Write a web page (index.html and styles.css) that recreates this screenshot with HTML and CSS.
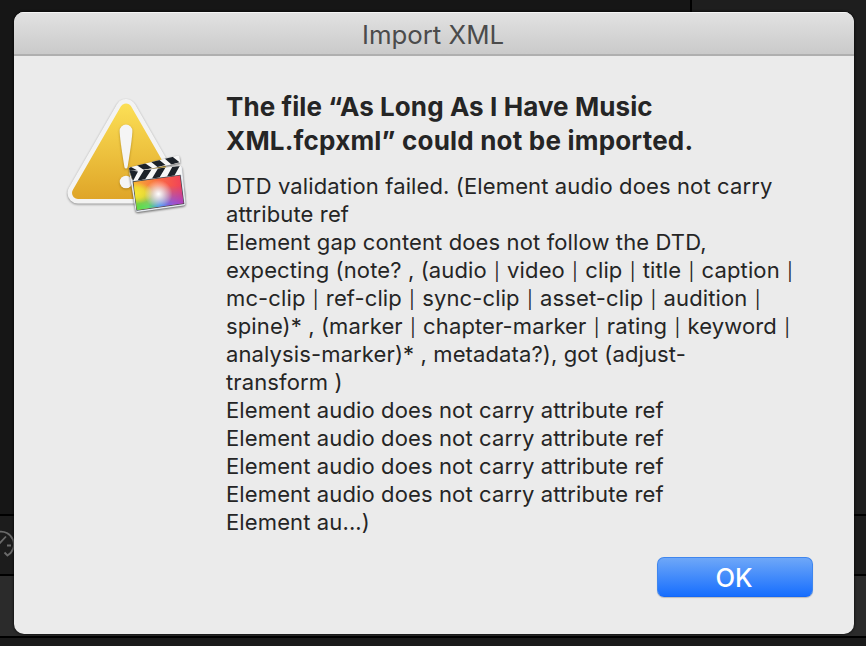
FILE: index.html
```html
<!DOCTYPE html>
<html lang="en">

<head>
    <meta charset="UTF-8">
    <meta name="viewport" content="width=device-width, initial-scale=1.0">
    <title>Import XML</title>
    <link rel="stylesheet" href="styles.css">
</head>

<body>
    <!-- editor window behind the dialog -->
    <div class="backdrop">
        <div class="panes">
            <div class="pane-left"></div>
            <div class="pane-right"></div>
        </div>
        <div class="toolbar">
            <svg class="gauge" width="14" height="32" viewBox="0 0 14 32" fill="none" stroke="#6a6a6a" stroke-width="1.8">
                <path d="M-2 2A12.8 12.8 0 0 1 7.5 25.5L4.5 22.5" />
                <path d="M-2 15L6 6.5M7 15.5h4" />
            </svg>
        </div>
        <div class="timeline"></div>
        <div class="bottom-strip"></div>
    </div>

    <div class="dialog">
        <div class="title-bar">Import XML</div>

        <div class="content">
            <svg class="alert-icon" width="144" height="136" viewBox="0 0 144 136">
                <defs>
                    <linearGradient id="yellow" gradientUnits="userSpaceOnUse" x1="0" y1="15" x2="0" y2="111">
                        <stop offset="0" stop-color="#fce056" />
                        <stop offset="1" stop-color="#dfa528" />
                    </linearGradient>
                    <linearGradient id="rainbow" x1="0" y1="0" x2="1" y2="0">
                        <stop offset="0" stop-color="#f4b435" />
                        <stop offset="0.5" stop-color="#fa6a42" />
                        <stop offset="1" stop-color="#f03a5c" />
                    </linearGradient>
                    <linearGradient id="rainbow-low" x1="0" y1="0" x2="1" y2="0">
                        <stop offset="0" stop-color="#62d936" />
                        <stop offset="0.3" stop-color="#64dc68" />
                        <stop offset="0.52" stop-color="#348bf5" />
                        <stop offset="0.75" stop-color="#8756e8" />
                        <stop offset="1" stop-color="#a43bd0" />
                    </linearGradient>
                    <linearGradient id="fade" x1="0" y1="0" x2="0" y2="1">
                        <stop offset="0.3" stop-color="#000" />
                        <stop offset="0.85" stop-color="#fff" />
                    </linearGradient>
                    <mask id="low-mask" maskContentUnits="objectBoundingBox">
                        <rect width="1" height="1" fill="url(#fade)" />
                    </mask>
                    <radialGradient id="glow">
                        <stop offset="0" stop-color="#fff" />
                        <stop offset="0.2" stop-color="#fff" stop-opacity="0.8" />
                        <stop offset="1" stop-color="#fff" stop-opacity="0" />
                    </radialGradient>
                    <radialGradient id="left-tint">
                        <stop offset="0" stop-color="#f8e636" />
                        <stop offset="0.5" stop-color="#f4e433" stop-opacity="0.8" />
                        <stop offset="1" stop-color="#f4e433" stop-opacity="0" />
                    </radialGradient>
                    <clipPath id="slate">
                        <path d="M77.5 94L124 87.5L127.5 115.3L81 122Z" />
                    </clipPath>
                    <clipPath id="top-bar">
                        <path d="M73 79.5L121.5 67.7Q123 67.5 123.5 69L124.3 74.8L75.5 84.5L73.3 82Z" />
                    </clipPath>
                    <clipPath id="low-bar">
                        <path d="M73.5 83L125 78L126 87L77 93Z" />
                    </clipPath>
                </defs>

                <!-- warning triangle -->
                <path class="triangle-edge" d="M70 21.5L118 105H22Z" />
                <path class="triangle" d="M70 21.5L118 105H22Z" />
                <g class="mark">
                    <path d="M63.6 43A6.4 6.4 0 0 1 76.4 43Q76.2 51 71.6 79Q71.3 80.6 70 80.6Q68.7 80.6 68.4 79Q63.8 51 63.6 43Z" />
                    <circle cx="70" cy="94" r="6.3" />
                </g>

                <!-- clapperboard -->
                <g class="clapper">
                    <path d="M73 83L76 91.5L126 79L129.5 115Q129.8 117 127.8 117.4L82 124Q79.8 124.2 79.5 122Z" fill="#e6eaf0" />
                    <g clip-path="url(#top-bar)">
                        <rect x="70" y="64" width="58" height="24" fill="#f7f7f7" />
                        <path d="M72 80L75 79L82.5 83L72 86ZM80.5 77L88 74.5L96 80L88 82ZM94 73L101.5 70.5L109.5 77L101.5 79ZM107.5 69.5L115 67.5L123.5 74.2L115.5 76.5Z" fill="#1c2229" />
                    </g>
                    <g clip-path="url(#low-bar)">
                        <rect x="70" y="76" width="60" height="19" fill="#f7f7f7" />
                        <path d="M72 82L82 83.5L76.5 94ZM88 82L95.5 81.5L89 91.5L81.5 92.5ZM102 80.5L109.5 79.5L103.5 89.5L96 90.5ZM116.5 78.5L124 77.5L118.5 87.5L111 88.5Z" fill="#1c2229" />
                    </g>
                </g>
                <path d="M76.6 93.3L124.6 86.7L128.3 115.9L80.5 122.8Z" fill="#39434c" />
                <g clip-path="url(#slate)">
                    <rect x="76" y="86" width="54" height="38" fill="url(#rainbow)" />
                    <rect x="76" y="86" width="54" height="38" fill="url(#rainbow-low)" mask="url(#low-mask)" />
                    <ellipse cx="80" cy="105" rx="17" ry="11" fill="url(#left-tint)" />
                    <circle cx="102.5" cy="106" r="14" fill="url(#glow)" />
                </g>
            </svg>

            <div class="message">
                <h1>The file “As Long As I Have Music<br><span class="file-line">XML.fcpxml” could not be imported.</span></h1>
                <p>
                    DTD validation failed. (Element audio does not carry<br>
                    attribute ref<br>
                    Element gap content does not follow the DTD,<br>
                    expecting (note? , (audio <i>|</i> video <i>|</i> clip <i>|</i> title <i>|</i> caption <i>|</i><br>
                    mc-clip <i>|</i> ref-clip <i>|</i> sync-clip <i>|</i> asset-clip <i>|</i> audition <i>|</i><br>
                    spine)* , (marker <i>|</i> chapter-marker <i>|</i> rating <i>|</i> keyword <i>|</i><br>
                    analysis-marker)* , metadata?), got (adjust-<br>
                    transform )<br>
                    Element audio does not carry attribute ref<br>
                    Element audio does not carry attribute ref<br>
                    Element audio does not carry attribute ref<br>
                    Element audio does not carry attribute ref<br>
                    Element au...)
                </p>
            </div>
        </div>

        <div class="buttons">
            <button class="ok-button">OK</button>
        </div>
    </div>
</body>

</html>
```
FILE: styles.css
```css
* {
    box-sizing: border-box;
}

body {
    margin: 0;
    padding: 12px 12px 12px 14px;
    height: 646px;
    overflow: hidden;
    font-family: Inter, "Liberation Sans", sans-serif;
    color: #252525;
    background: #161616;
}

.backdrop {
    position: absolute;
    inset: 0;
    display: flex;
    flex-direction: column;
}

.panes {
    display: flex;
    height: 516px;
    border-bottom: 2px solid #000;
}

.pane-left {
    width: 692px;
    border-right: 2px solid #000;
    background: #161616;
}

.pane-right {
    flex: 1;
    background: #1e1e1e;
}

.toolbar {
    height: 60px;
    padding-top: 14px;
    border-bottom: 2px solid #000;
    background: #1c1c1c;
}

.gauge {
    display: block;
}

.timeline {
    height: 62px;
    border-bottom: 2px solid #000;
    background: #2b2b2b;
}

.bottom-strip {
    flex: 1;
    background: #1a1a1a;
}

.dialog {
    position: relative;
    width: 840px;
    height: 622px;
    border-radius: 10px;
    overflow: hidden;
    background: #ebebeb;
    box-shadow: 0 0 3px #000;
}

.title-bar {
    height: 44px;
    border-bottom: 2px solid #afafaf;
    background: linear-gradient(#e2e2e2, #cacaca);
    box-shadow: inset 0 1px 0 #f4f4f4;
    color: #4b4b4b;
    font-size: 25.8px;
    line-height: 46px;
    text-align: center;
    text-indent: -2px;
}

.content {
    display: flex;
    height: 489px;
    padding: 32px 0 0 42px;
}

.alert-icon {
    flex: none;
}

.triangle-edge {
    fill: #f3f3f3;
    stroke: #f3f3f3;
    stroke-width: 21;
    stroke-linejoin: round;
    filter: drop-shadow(0 1px 1px rgba(0, 0, 0, 0.4));
}

.triangle {
    fill: url(#yellow);
    stroke: url(#yellow);
    stroke-width: 12;
    stroke-linejoin: round;
}

.mark {
    fill: #f5f5f5;
    filter: drop-shadow(0 1px 1px rgba(120, 80, 0, 0.5));
}

.clapper {
    filter: drop-shadow(0 1px 1px rgba(0, 0, 0, 0.6));
}

.message {
    margin-left: 26px;
    white-space: nowrap;
}

h1 {
    margin: 2px 0 14px;
    font-size: 26px;
    line-height: 34px;
    font-weight: 700;
    letter-spacing: 0.09px;
}

.file-line {
    letter-spacing: 0.2px;
}

p {
    margin: 0;
    font-size: 22px;
    line-height: 28px;
    letter-spacing: 0.12px;
}

/* shorter separator bars */
p i {
    padding: 0 0.9px;
    font-size: 17.5px;
    font-style: normal;
    line-height: 1;
}

.buttons {
    display: flex;
    justify-content: flex-end;
    padding: 12px 41px 0;
}

.ok-button {
    width: 156px;
    height: 40px;
    padding: 0 2px 0 0;
    border: 1px solid #3f86ee;
    border-bottom-color: #1567f5;
    border-radius: 7px;
    background: linear-gradient(#6ea7f8, #176efe);
    box-shadow: 0 1px 1px rgba(0, 0, 0, 0.2);
    color: #fff;
    font-family: inherit;
    font-size: 25.5px;
    font-weight: 500;
}
```
